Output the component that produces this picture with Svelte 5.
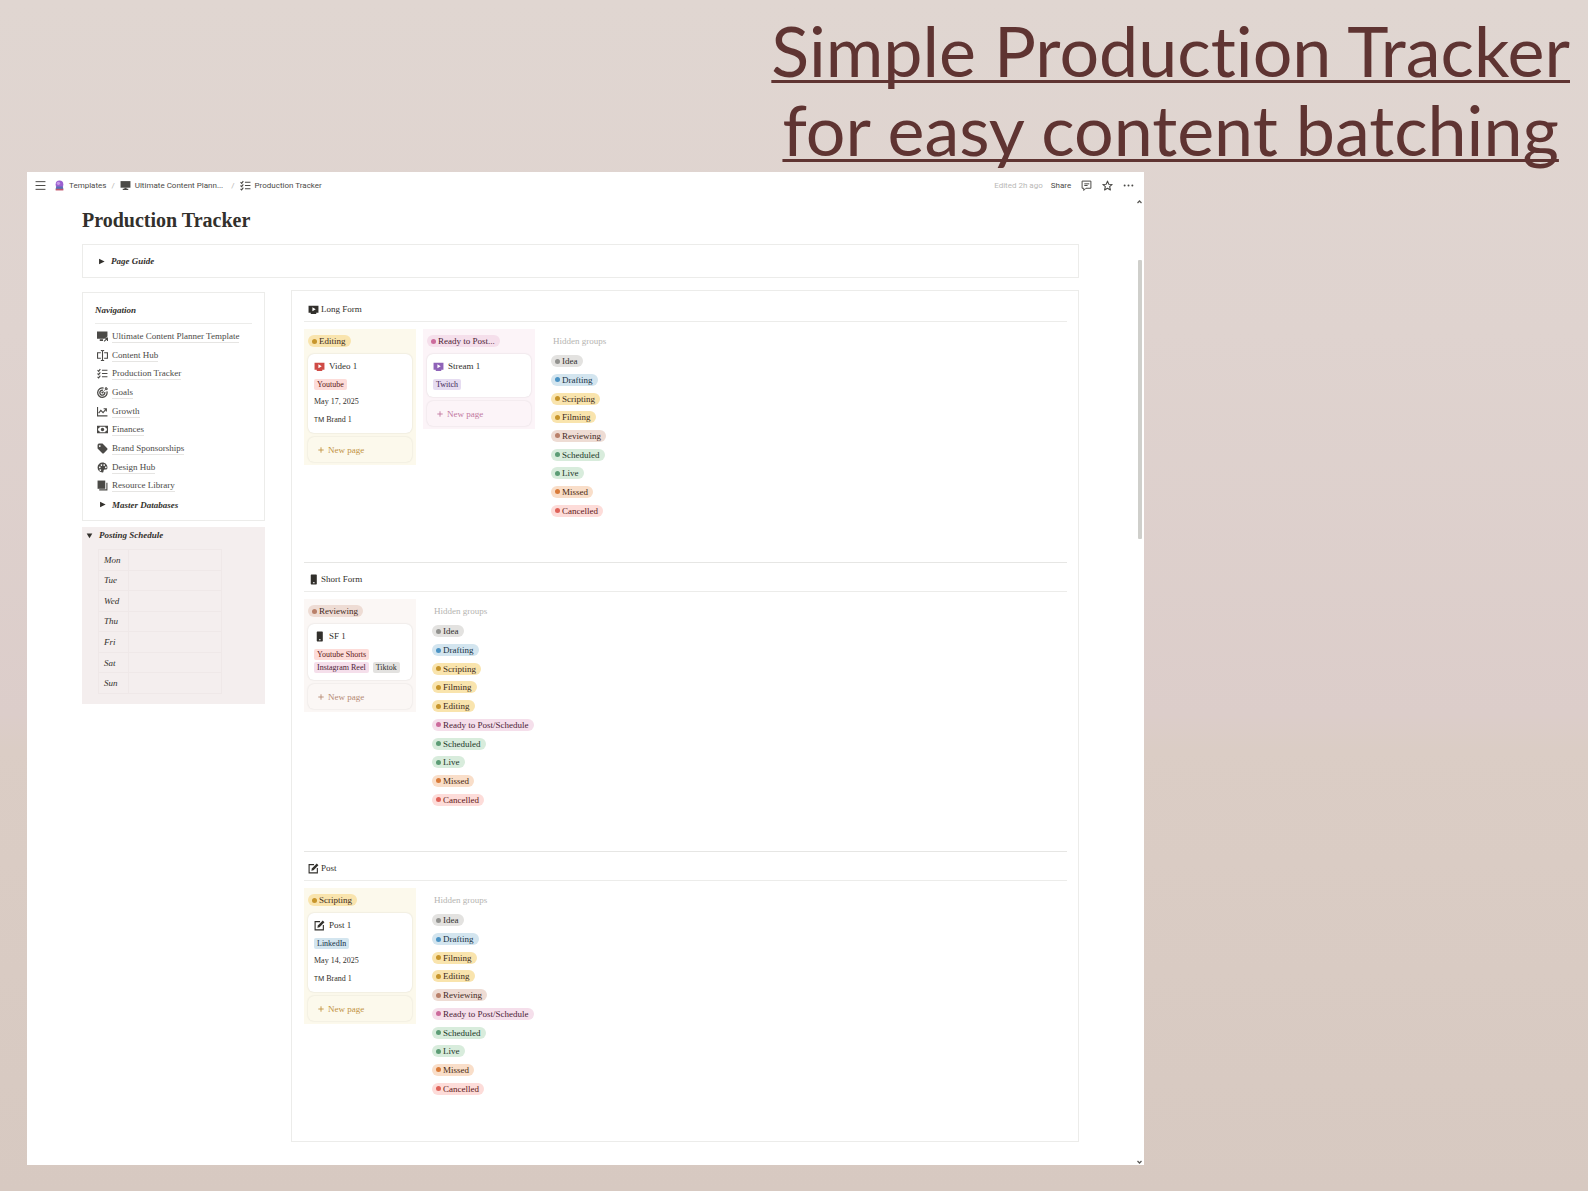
<script>
  const nav = [
    { icon: 'screenLink', label: 'Ultimate Content Planner Template' },
    { icon: 'rename', label: 'Content Hub' },
    { icon: 'checklist', label: 'Production Tracker' },
    { icon: 'target', label: 'Goals' },
    { icon: 'growth', label: 'Growth' },
    { icon: 'cash', label: 'Finances' },
    { icon: 'tag', label: 'Brand Sponsorships' },
    { icon: 'palette', label: 'Design Hub' },
    { icon: 'library', label: 'Resource Library' }
  ];

  const days = ['Mon', 'Tue', 'Wed', 'Thu', 'Fri', 'Sat', 'Sun'];

  const statusColor = {
    Idea: 'gray',
    Drafting: 'blue',
    Scripting: 'yellow',
    Filming: 'yellow',
    Editing: 'yellow',
    Reviewing: 'brown',
    'Ready to Post/Schedule': 'pink',
    Scheduled: 'green',
    Live: 'green',
    Missed: 'orange',
    Cancelled: 'red'
  };

  const boards = [
    {
      title: 'Long Form',
      icon: 'video',
      columns: [
        {
          status: 'Editing',
          color: 'yellow',
          card: { icon: 'video', tint: 'red', title: 'Video 1', tags: [['Youtube', 'red']], date: 'May 17, 2025', brand: 'Brand 1' }
        },
        {
          status: 'Ready to Post...',
          color: 'pink',
          card: { icon: 'video', tint: 'purple', title: 'Stream 1', tags: [['Twitch', 'purple']] }
        }
      ],
      hidden: ['Idea', 'Drafting', 'Scripting', 'Filming', 'Reviewing', 'Scheduled', 'Live', 'Missed', 'Cancelled']
    },
    {
      title: 'Short Form',
      icon: 'phone',
      columns: [
        {
          status: 'Reviewing',
          color: 'brown',
          card: { icon: 'phone', title: 'SF 1', tags: [['Youtube Shorts', 'red'], ['Instagram Reel', 'pink'], ['Tiktok', 'gray']] }
        }
      ],
      hidden: ['Idea', 'Drafting', 'Scripting', 'Filming', 'Editing', 'Ready to Post/Schedule', 'Scheduled', 'Live', 'Missed', 'Cancelled']
    },
    {
      title: 'Post',
      icon: 'edit',
      columns: [
        {
          status: 'Scripting',
          color: 'yellow',
          card: { icon: 'edit', title: 'Post 1', tags: [['LinkedIn', 'blue']], date: 'May 14, 2025', brand: 'Brand 1' }
        }
      ],
      hidden: ['Idea', 'Drafting', 'Filming', 'Editing', 'Reviewing', 'Ready to Post/Schedule', 'Scheduled', 'Live', 'Missed', 'Cancelled']
    }
  ];

  // three rows of hidden groups take 56px
  const listHeight = (count) => Math.round((count * 56) / 3);
</script>

{#snippet icon(name)}
  <svg class="icon" viewBox="0 0 20 20" aria-hidden="true">
    {#if name === 'screen'}
      <path d="M1 2h18v12H1z" fill="currentColor" />
      <path d="M8 14h4v2h3v2H5v-2h3z" fill="currentColor" />
    {:else if name === 'screenLink'}
      <path d="M0 1h19v9l-6 4H0zM5 15h6v3H5z" fill="currentColor" />
      <path d="M13 19l6-6M14 13h5v5" fill="none" stroke="currentColor" stroke-width="2" />
    {:else if name === 'rename'}
      <path d="M7 5H1v10h6M13 5h6v10h-6M10 2v16M7 1h2l1 1 1-1h2M7 19h2l1-1 1 1h2" fill="none" stroke="currentColor" stroke-width="2" />
    {:else if name === 'checklist'}
      <path d="M1 4l2 2 3-4M1 10l2 2 3-4M1 16l2 2 3-4M9 4h10M9 10h10M9 16h10" fill="none" stroke="currentColor" stroke-width="2" />
    {:else if name === 'target'}
      <path d="M18 8a8.5 8.5 0 1 1-6-6M14 9a4.5 4.5 0 1 1-3-3" fill="none" stroke="currentColor" stroke-width="2.4" />
      <path d="M10 10l5-5V2l2-2v3h3l-2 2h-3" fill="currentColor" stroke="currentColor" />
      <circle cx="10" cy="10" r="2" fill="currentColor" />
    {:else if name === 'growth'}
      <path d="M1 2v16h18M3 13l4-5 4 4 6-7M12 5h5v5" fill="none" stroke="currentColor" stroke-width="2" />
    {:else if name === 'cash'}
      <path d="M0 3h20v14H0zM5 5a3 3 0 0 1-3 3v4a3 3 0 0 1 3 3h10a3 3 0 0 1 3-3V8a3 3 0 0 1-3-3z" fill="currentColor" fill-rule="evenodd" />
      <circle cx="10" cy="10" r="3" fill="currentColor" />
    {:else if name === 'tag'}
      <path d="M1 3l2-2h7l9 9v2l-7 7h-2l-9-9zM5 4a1.5 1.5 0 1 0 .1 0z" fill="currentColor" fill-rule="evenodd" />
    {:else if name === 'palette'}
      <path d="M10 1a9 9 0 1 0 0 18c3 0 1-4 3-5s6 1 6-4c0-5-4-9-9-9zM5 8a1.5 1.5 0 1 0 .1 0zM8 4a1.5 1.5 0 1 0 .1 0zM13 4a1.5 1.5 0 1 0 .1 0zM16 8a1.5 1.5 0 1 0 .1 0zM6 13a1.5 1.5 0 1 0 .1 0z" fill="currentColor" fill-rule="evenodd" />
    {:else if name === 'library'}
      <path d="M1 1h14v15H1z" fill="currentColor" />
      <path d="M4 18h14V5" fill="none" stroke="currentColor" stroke-width="2" />
    {:else if name === 'video'}
      <path d="M1 3h18v13H1zM8 6v7l6-3.500zM5 16h10v2H5z" fill="currentColor" fill-rule="evenodd" />
    {:else if name === 'phone'}
      <path d="M6 1h9l1 1v16l-1 1H6l-1-1V2zM9 15v2h3v-2z" fill="currentColor" fill-rule="evenodd" />
    {:else if name === 'edit'}
      <path d="M11 3H2v15h15V9" fill="none" stroke="currentColor" stroke-width="2" />
      <path d="M7 10l9-9 3 3-9 9-4 1z" fill="currentColor" />
    {:else if name === 'crystal'}
      <circle cx="10" cy="8" r="7" fill="#9b5fd0" />
      <circle cx="8" cy="6" r="3" fill="#c79ae8" />
      <path d="M4 12h12l1 5H3z" fill="#5b6fb5" />
      <path d="M3 16h14v3H3z" fill="#c2566b" />
    {:else if name === 'menu'}
      <path d="M1 3h18M1 10h18M1 17h18" fill="none" stroke="currentColor" stroke-width="1.8" />
    {:else if name === 'comment'}
      <path d="M2 2h16v13h-9l-4 4v-4H2zM6 7h9M6 10h6" fill="none" stroke="currentColor" stroke-width="1.8" stroke-linejoin="round" />
    {:else if name === 'star'}
      <path d="M10 2l2.4 5.6 6.1.5-4.600 4 1.400 6-5.300-3.200-5.300 3.200 1.400-6-4.600-4 6.100-.5z" fill="none" stroke="currentColor" stroke-width="2" stroke-linejoin="round" />
    {:else if name === 'dots'}
      <circle cx="3" cy="10" r="1.8" fill="currentColor" />
      <circle cx="10" cy="10" r="1.8" fill="currentColor" />
      <circle cx="17" cy="10" r="1.8" fill="currentColor" />
    {:else if name === 'right'}
      <path d="M3 2l16 8-16 8z" fill="currentColor" />
    {:else if name === 'down'}
      <path d="M2 4h16l-8 14z" fill="currentColor" />
    {:else if name === 'plus'}
      <path d="M10 1v18M1 10h18" fill="none" stroke="currentColor" stroke-width="3" />
    {:else if name === 'up'}
      <path d="M2 14l8-8 8 8" fill="none" stroke="currentColor" stroke-width="5" />
    {:else if name === 'caret'}
      <path d="M2 6l8 8 8-8" fill="none" stroke="currentColor" stroke-width="5" />
    {/if}
  </svg>
{/snippet}

{#snippet pill(label, color)}
  <span class="pill {color}"><i class="dot"></i>{label}</span>
{/snippet}

<div class="page">
  <h1 class="headline">Simple Production Tracker<br />for easy content batching</h1>

  <div class="window">
    <header class="topbar">
      <button class="icon-btn menu" aria-label="Menu">{@render icon('menu')}</button>
      <nav class="crumbs" aria-label="Breadcrumb">
        <a href="#templates">{@render icon('crystal')}Templates</a>
        <span class="slash">/</span>
        <a href="#planner">{@render icon('screen')}Ultimate Content Plann...</a>
        <span class="slash wide">/</span>
        <a href="#tracker">{@render icon('checklist')}Production Tracker</a>
      </nav>
      <div class="actions">
        <span class="edited">Edited 2h ago</span>
        <button class="share">Share</button>
        <button class="icon-btn" aria-label="Comments">{@render icon('comment')}</button>
        <button class="icon-btn" aria-label="Favorite">{@render icon('star')}</button>
        <button class="icon-btn" aria-label="More">{@render icon('dots')}</button>
      </div>
    </header>

    <div class="body">
      <main class="content">
        <h2 class="title">Production Tracker</h2>
        <button class="guide toggle">{@render icon('right')}Page Guide</button>

        <div class="columns">
          <aside class="side">
            <section class="nav-box">
              <h3>Navigation</h3>
              <ul class="nav-list">
                {#each nav as item}
                  <li>{@render icon(item.icon)}<a href="#nav">{item.label}</a></li>
                {/each}
                <li><button class="toggle">{@render icon('right')}Master Databases</button></li>
              </ul>
            </section>

            <section class="schedule">
              <button class="toggle">{@render icon('down')}Posting Schedule</button>
              <table>
                <tbody>
                  {#each days as day}
                    <tr><th scope="row">{day}</th><td></td></tr>
                  {/each}
                </tbody>
              </table>
            </section>
          </aside>

          <div class="boards">
            {#each boards as board}
              <section class="board">
                <h3 class="board-title">{@render icon(board.icon)}{board.title}</h3>
                <div class="groups">
                  {#each board.columns as col}
                    <div class="column {col.color}">
                      {@render pill(col.status, col.color)}
                      <article class="card">
                        <h4 class={col.card.tint}>{@render icon(col.card.icon)}<span>{col.card.title}</span></h4>
                        <div class="tags">
                          {#each col.card.tags as [label, color]}
                            <span class="tag {color}">{label}</span>
                          {/each}
                        </div>
                        {#if col.card.date}<p>{col.card.date}</p>{/if}
                        {#if col.card.brand}<p><span class="tm">TM</span> {col.card.brand}</p>{/if}
                      </article>
                      <button class="new">{@render icon('plus')}New page</button>
                    </div>
                  {/each}
                  <div class="hidden">
                    <h4>Hidden groups</h4>
                    <ul style="height: {listHeight(board.hidden.length)}px">
                      {#each board.hidden as status}
                        <li>{@render pill(status, statusColor[status])}</li>
                      {/each}
                    </ul>
                  </div>
                </div>
              </section>
            {/each}
          </div>
        </div>
      </main>

      <div class="scrollbar" aria-hidden="true">
        {@render icon('up')}
        <div class="track"><div class="thumb"></div></div>
        {@render icon('caret')}
      </div>
    </div>
  </div>
</div>

<style>
  :global(body) { margin: 0; }

  .page {
    min-height: 100vh;
    box-sizing: border-box;
    padding: 11px 18px 24px 27px;
    background: linear-gradient(180deg, #e0d6d1 0%, #dfd3cf 28%, #dccdca 60%, #dbcdc5 63%, #d7c9c1 100%);
    color: #32302c;
    font-family: "Liberation Serif", serif;
    font-size: 9px;
    line-height: 14px;
  }

  h1, h2, h3, h4, p, ul { margin: 0; padding: 0; font-weight: 400; font-size: inherit; }
  ul { list-style: none; }
  a { color: inherit; text-decoration: none; }
  button {
    border: 0;
    padding: 0;
    background: none;
    color: inherit;
    font: inherit;
    cursor: pointer;
  }
  .icon { width: 11px; height: 11px; flex: none; display: block; }

  .headline {
    width: fit-content;
    margin: 0 0 3px auto;
    color: #5f3432;
    font-family: Lato, sans-serif;
    font-size: 70px;
    line-height: 79px;
    font-variant-ligatures: none;
    text-align: center;
    text-decoration: underline;
    text-decoration-thickness: 3px;
    text-underline-offset: 3px;
    text-decoration-skip-ink: none;
  }

  .window { width: 72.4%; background: #fff; }

  .topbar {
    display: flex;
    align-items: center;
    height: 27px;
    padding: 0 10px 0 8px;
    font-family: Roboto, sans-serif;
    font-size: 8px;
    color: #4b4a47;
  }
  .menu { margin-right: 8px; }
  .crumbs, .crumbs a, .actions { display: flex; align-items: center; }
  .crumbs a { gap: 4px; }
  .slash { margin: 0 5px; color: #b5b4b1; }
  .slash.wide { margin-left: 8px; }
  .actions { margin-left: auto; gap: 10px; }
  .edited { color: #b9b8b6; margin-right: -2px; }

  .body { display: flex; }
  .content { flex: 1; min-width: 0; padding: 8px 56px 23px 55px; }
  .title { font-size: 20px; line-height: 26px; font-weight: 700; }

  .toggle {
    display: flex;
    align-items: center;
    gap: 6px;
    font-weight: 700;
    font-style: italic;
  }
  .toggle .icon { width: 7px; height: 7px; }
  .guide {
    width: 100%;
    height: 34px;
    margin: 11px 0 12px;
    padding-left: 15px;
    border: 1px solid #ececea;
  }

  .columns { display: flex; align-items: flex-start; gap: 26px; }
  .side { width: 183px; flex: none; padding-top: 2px; }
  .nav-box {
    padding: 10px 12px 6px;
    border: 1px solid #ececea;
    margin-bottom: 6px;
  }
  .nav-box h3 {
    padding-bottom: 6px;
    border-bottom: 1px solid #ececea;
    font-weight: 700;
    font-style: italic;
  }
  .nav-list {
    display: grid;
    grid-auto-rows: 1fr;
    height: 187px;
    padding: 3px 0 0 2px;
  }
  .nav-list li { display: flex; align-items: center; gap: 4px; color: #4b4a47; }
  .nav-list a { line-height: 12px; border-bottom: 1px solid #e6e5e3; }
  .nav-list .toggle { margin-left: 2px; color: #32302c; }

  .schedule { padding: 1px 4px 10px; background: #f4eeee; }
  .schedule table {
    width: 124px;
    height: 145px;
    margin: 7px 0 0 12px;
    border-collapse: collapse;
  }
  th, td { padding: 0; border: 1px solid #efe8e8; }
  th { width: 24px; padding-left: 5px; text-align: left; font-style: italic; font-weight: 400; }

  .boards {
    flex: 1;
    min-width: 0;
    padding: 2px 11px 1px 12px;
    border: 1px solid #ececea;
  }
  .board { padding: 7px 0 42px; }
  .board + .board { border-top: 1px solid #e6e6e4; }
  .board-title {
    display: flex;
    align-items: center;
    gap: 2px;
    padding: 2px 4px 5px;
    border-bottom: 1px solid #ececea;
  }

  .groups { display: flex; align-items: flex-start; gap: 7px; padding-top: 7px; }
  .column {
    display: flex;
    flex-direction: column;
    width: 104px;
    padding: 6px 4px 3px;
  }
  .column.yellow { background: #fcf9ec; color: #c29343; }
  .column.pink { background: #fcf4f8; color: #c278a0; }
  .column.brown { background: #fbf7f5; color: #b58a74; }

  .pill {
    display: flex;
    align-items: center;
    gap: 2px;
    height: 12px;
    padding: 0 5px 0 4px;
    border-radius: 6px;
    line-height: 12px;
    white-space: nowrap;
  }
  .column .pill { align-self: flex-start; margin-bottom: 7px; }
  .dot { width: 5px; height: 5px; flex: none; border-radius: 50%; }

  .pill.gray, .tag.gray { background: #e3e2e0; color: #32302c; }
  .pill.blue, .tag.blue { background: #d3e5ef; color: #183347; }
  .pill.yellow { background: #f9e4ad; color: #402c1b; }
  .pill.brown { background: #eedcd4; color: #442a1e; }
  .pill.pink, .tag.pink { background: #f5dfeb; color: #4c2337; }
  .pill.green { background: #d8ecdc; color: #1c3829; }
  .pill.orange { background: #f9dec9; color: #49290e; }
  .pill.red, .tag.red { background: #fddcd9; color: #5d1715; }
  .tag.purple { background: #e6dcf1; color: #412454; }

  .gray .dot { background: #91918e; }
  .blue .dot { background: #4b93c4; }
  .yellow .dot { background: #c7952c; }
  .brown .dot { background: #b9806a; }
  .pink .dot { background: #cc6b9c; }
  .green .dot { background: #5c9c75; }
  .orange .dot { background: #d97b3a; }
  .red .dot { background: #df6259; }

  .card {
    margin-bottom: 4px;
    padding: 5px 6px 7px;
    border-radius: 6px;
    background: #fff;
    box-shadow: 0 0 2px #00000024;
    color: #32302c;
    font-size: 8px;
    line-height: 12px;
  }
  .card h4 { display: flex; align-items: center; gap: 4px; font-size: 9px; line-height: 14px; margin-bottom: 6px; }
  .card h4 span { color: #32302c; }
  .card h4.red { color: #cf4b46; }
  .card h4.purple { color: #8f63b8; }
  .card p { margin-top: 6px; }
  .tm { font-family: "Noto Sans", sans-serif; font-size: 7px; line-height: 1; }
  .tags { display: flex; flex-wrap: wrap; gap: 2px 4px; }
  .tag { padding: 0 3px; border-radius: 2px; line-height: 11px; }

  .new {
    display: flex;
    align-items: center;
    gap: 4px;
    height: 25px;
    padding-left: 10px;
    border-radius: 6px;
    box-shadow: 0 0 2px #00000020;
  }
  .new .icon { width: 6px; height: 6px; }

  .hidden { margin-left: 9px; padding-top: 5px; }
  .hidden h4 { padding: 0 2px; color: #b5b4b1; }
  .hidden ul { display: grid; grid-auto-rows: 1fr; padding-top: 4px; }
  .hidden li { display: flex; align-items: center; }

  .scrollbar {
    display: flex;
    flex-direction: column;
    align-items: center;
    width: 9px;
    color: #5a5956;
  }
  .scrollbar .icon { width: 5px; height: 6px; }
  .track { flex: 1; width: 4px; padding-top: 55px; }
  .thumb { height: 31%; border-radius: 1px; background: #cfcfcb; }
</style>
